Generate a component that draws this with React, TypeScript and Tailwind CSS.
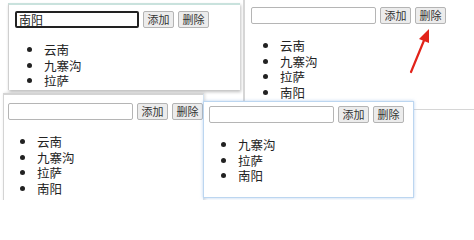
import type { ReactNode } from 'react'

const font = { fontFamily: '"Noto Sans CJK SC", "Microsoft YaHei", sans-serif' }

function Btn({ children }: { children: ReactNode }) {
  return (
    <button className="h-[17px] w-[31px] rounded-[2px] border border-[#b4b4b4] bg-[#ececec] text-[11px] leading-none text-[#333]">
      {children}
    </button>
  )
}

function Panel({
  className,
  items,
  value = '',
  focused = false,
}: {
  className: string
  items: string[]
  value?: string
  focused?: boolean
}) {
  return (
    <div className={'absolute flex flex-col bg-white ' + className}>
      <div className="flex items-center gap-[4px]">
        <input
          readOnly
          value={value}
          className={
            focused
              ? 'h-[17px] w-[124px] rounded-[2px] border-2 border-[#222] px-[2px] text-[12px] leading-none text-[#222] outline-none'
              : 'h-[17px] w-[125px] rounded-[2px] border border-[#b5b5b5] px-[2px] text-[12px] outline-none'
          }
        />
        <Btn>添加</Btn>
        <Btn>删除</Btn>
      </div>
      <ul className="mt-[14px] flex list-disc flex-col pl-[29px] text-[12.5px] leading-[15.5px] text-[#222]">
        {items.map((it) => (
          <li key={it}>{it}</li>
        ))}
      </ul>
    </div>
  )
}

export default function App() {
  return (
    <div className="relative h-[200px] w-[474px] overflow-hidden bg-white" style={font}>
      <Panel
        className="left-[8px] top-[3px] h-[87px] w-[232px] border-t-2 border-l border-[#c9e2dd] border-l-[#cfcfcf] pl-[6px] pt-[6px] shadow-[1px_2px_3px_rgba(0,0,0,0.25)]"
        items={['云南', '九寨沟', '拉萨']}
        value="南阳"
        focused
      />
      <Panel
        className="left-[243px] top-0 h-[110px] w-[235px] border-b border-l-2 border-[#d6d6d6] pl-[6px] pt-[7px]"
        items={['云南', '九寨沟', '拉萨', '南阳']}
      />
      <Panel
        className="left-[3px] top-[93px] h-[110px] w-[201px] border-t-2 border-l border-r border-[#d4d4d4] border-r-[#d5e3ef] pl-[4px] pt-[8px] shadow-[1px_0_3px_rgba(0,0,0,0.15)]"
        items={['云南', '九寨沟', '拉萨', '南阳']}
      />
      <Panel
        className="left-[203px] top-[101px] h-[97px] w-[211px] border border-[#bcd6f0] pl-[5px] pt-[4px] shadow-[0_0_3px_rgba(140,180,230,0.6)]"
        items={['九寨沟', '拉萨', '南阳']}
      />
      <svg className="absolute left-0 top-0" width="474" height="200" viewBox="0 0 474 200">
        <line x1="411" y1="72" x2="425" y2="38" stroke="#e2231a" strokeWidth="2.2" strokeLinecap="round" />
        <polygon points="429,29 419,39 429,43" fill="#e2231a" />
      </svg>
    </div>
  )
}
